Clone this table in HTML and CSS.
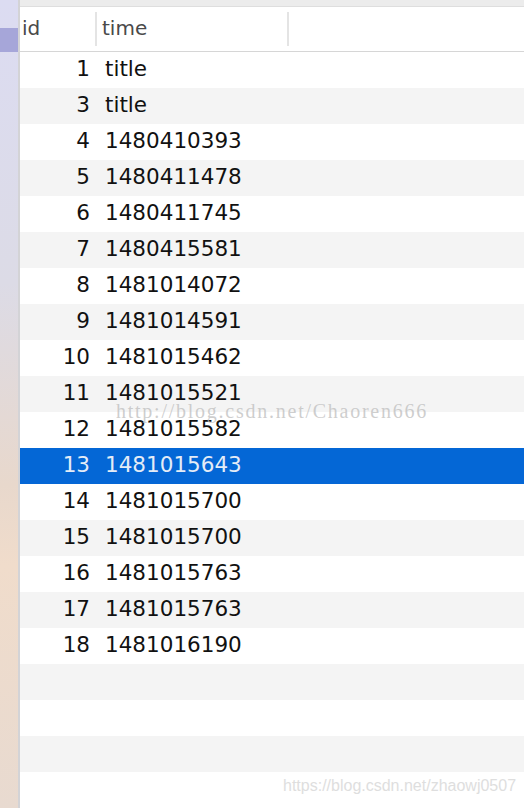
FILE: index.html
```html
<!DOCTYPE html>
<html>
<head>
<meta charset="utf-8">
<link rel="stylesheet" href="styles.css">
</head>
<body>
<div class="app">
  <div class="sidebar"><div class="sel"></div></div>
  <div class="main">
    <div class="topstrip"></div>
    <div class="header">
      <div class="hcell hid">id</div>
      <div class="hcell htime">time</div>
      <div class="hcell hrest"></div>
    </div>
    <div class="rows">
      <div class="row"><span class="id">1</span><span class="t">title</span></div>
      <div class="row alt"><span class="id">3</span><span class="t">title</span></div>
      <div class="row"><span class="id">4</span><span class="t">1480410393</span></div>
      <div class="row alt"><span class="id">5</span><span class="t">1480411478</span></div>
      <div class="row"><span class="id">6</span><span class="t">1480411745</span></div>
      <div class="row alt"><span class="id">7</span><span class="t">1480415581</span></div>
      <div class="row"><span class="id">8</span><span class="t">1481014072</span></div>
      <div class="row alt"><span class="id">9</span><span class="t">1481014591</span></div>
      <div class="row"><span class="id">10</span><span class="t">1481015462</span></div>
      <div class="row alt"><span class="id">11</span><span class="t">1481015521</span></div>
      <div class="row"><span class="id">12</span><span class="t">1481015582</span></div>
      <div class="row selected"><span class="id">13</span><span class="t">1481015643</span></div>
      <div class="row"><span class="id">14</span><span class="t">1481015700</span></div>
      <div class="row alt"><span class="id">15</span><span class="t">1481015700</span></div>
      <div class="row"><span class="id">16</span><span class="t">1481015763</span></div>
      <div class="row alt"><span class="id">17</span><span class="t">1481015763</span></div>
      <div class="row"><span class="id">18</span><span class="t">1481016190</span></div>
      <div class="row alt"></div>
      <div class="row"></div>
      <div class="row alt"></div>
      <div class="row"></div>
    </div>
  </div>
  <div class="wm1">http://blog.csdn.net/Chaoren666</div>
  <div class="wm2">https://blog.csdn.net/zhaowj0507</div>
</div>
</body>
</html>
```
FILE: styles.css
```css
html, body {
  margin: 0;
  padding: 0;
  background: #fff;
  overflow: hidden;
}
.app {
  position: relative;
  display: flex;
  width: 524px;
  height: 808px;
  overflow: hidden;
  font-family: "DejaVu Sans", "Lucida Grande", sans-serif;
}
.sidebar {
  width: 18px;
  flex: none;
  background: linear-gradient(to bottom, #dcdcf2 0%, #dcdbe6 35%, #e8d8cc 60%, #f0dccb 70%, #e8dad0 100%);
  border-right: 2px solid #d3d3d6;
  padding-top: 28px;
  box-sizing: content-box;
}
.sel {
  height: 24px;
  background: #a6a6d9;
}
.main {
  flex: 1;
  display: flex;
  flex-direction: column;
}
.topstrip {
  height: 6px;
  background: #ececec;
  border-bottom: 1px solid #dedede;
}
.header {
  height: 44px;
  display: flex;
  align-items: center;
  border-bottom: 1px solid #d6d6d6;
  color: #4a4a4a;
  font-size: 20px;
}
.hcell {
  height: 34px;
  line-height: 32px;
  box-sizing: border-box;
}
.hid {
  width: 77px;
  padding-left: 2px;
  border-right: 2px solid #e4e4e4;
}
.htime {
  width: 192px;
  padding-left: 5px;
  border-right: 2px solid #e4e4e4;
}
.rows {
  display: flex;
  flex-direction: column;
}
.row {
  height: 36px;
  box-sizing: border-box;
  padding-bottom: 4px;
  display: flex;
  align-items: center;
  background: #fff;
  color: #111;
  font-size: 21.5px;
}
.row.alt {
  background: #f4f4f4;
}
.row.selected {
  background: #0467d6;
  color: #e4ecf7;
}
.id {
  width: 70px;
  text-align: right;
}
.t {
  padding-left: 15px;
}
.wm1 {
  position: absolute;
  left: 116px;
  top: 400px;
  font-family: "Liberation Serif", serif;
  font-size: 20px;
  letter-spacing: 1.75px;
  color: rgba(190, 190, 190, 0.75);
}
.wm2 {
  position: absolute;
  left: 283px;
  top: 777px;
  font-family: "Liberation Sans", Arial, sans-serif;
  font-size: 16px;
  color: #dedede;
}
```
